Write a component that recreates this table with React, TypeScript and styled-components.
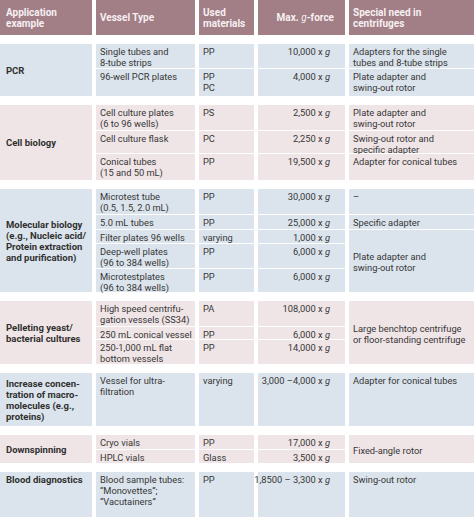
import React from 'react';
import styled, { createGlobalStyle } from 'styled-components';

const GlobalStyle = createGlobalStyle`
  html, body {
    margin: 0;
    padding: 0;
    background: #ffffff;
  }
  body {
    font-family: Roboto, "Noto Sans", Arial, sans-serif;
    color: #363636;
  }
`;

const tones = {
  blue: '#dbe4ec',
  pink: '#f0e5e6',
  head: '#a27e86',
};

type Tone = keyof typeof tones;

const Table = styled.div`
  width: 474px;
  display: flex;
  flex-direction: column;
  gap: 9px;
`;

const Grid = styled.div<{ $tone: Tone; $rows: string }>`
  display: grid;
  grid-template-columns: 92px 99px 55px 87px 125px;
  grid-template-rows: ${(p) => p.$rows};
  column-gap: 4px;
  row-gap: 1px;
  --tone: ${(p) => tones[p.$tone]};
`;

const HeadCell = styled.div<{ $right?: boolean }>`
  background: var(--tone);
  color: #f7f0f2;
  font-size: 10px;
  font-weight: 700;
  line-height: 11px;
  display: flex;
  align-items: center;
  justify-content: ${(p) => (p.$right ? 'flex-end' : 'flex-start')};
  padding: 0 ${(p) => (p.$right ? '11px' : '4px')} 0 4px;
  &:first-child {
    padding-left: 6px;
  }
`;

const Label = styled.div<{ $span: number; $top?: boolean }>`
  grid-row: span ${(p) => p.$span};
  background: var(--tone);
  font-size: 9.5px;
  font-weight: 700;
  line-height: 11px;
  color: #303030;
  padding: 2px 4px 2px 6px;
  white-space: pre-line;
  display: flex;
  align-items: ${(p) => (p.$top ? 'flex-start' : 'center')};
`;

const Cell = styled.div<{ $right?: boolean; $span?: number; $center?: boolean }>`
  grid-row: span ${(p) => p.$span ?? 1};
  background: var(--tone);
  font-size: 9.3px;
  line-height: 11px;
  padding: ${(p) => (p.$right ? '2px 15px 0 2px' : '2px 2px 0 4px')};
  text-align: ${(p) => (p.$right ? 'right' : 'left')};
  white-space: ${(p) => (p.$right ? 'nowrap' : 'pre-line')};
  display: flex;
  flex-direction: column;
  justify-content: ${(p) => (p.$center ? 'center' : 'flex-start')};
  align-items: ${(p) => (p.$right ? 'flex-end' : 'flex-start')};
`;

const G = styled.i<{ $light?: boolean }>`
  font-style: italic;
  font-weight: ${(p) => (p.$light ? 400 : 'inherit')};
`;

type Row = {
  vessel: string;
  material: string;
  force: string;
  special?: string;
  specialSpan?: number;
};

type Group = {
  label: string;
  tone: Tone;
  rows: string;
  top?: boolean;
  items: Row[];
};

const groups: Group[] = [
  {
    label: 'PCR',
    tone: 'blue',
    rows: '24px 27px',
    items: [
      { vessel: 'Single tubes and\n8-tube strips', material: 'PP', force: '10,000', special: 'Adapters for the single\ntubes and 8-tube strips' },
      { vessel: '96-well PCR plates', material: 'PP\nPC', force: '4,000', special: 'Plate adapter and\nswing-out rotor' },
    ],
  },
  {
    label: 'Cell biology',
    tone: 'pink',
    rows: '25px 22px 26px',
    items: [
      { vessel: 'Cell culture plates\n(6 to 96 wells)', material: 'PS', force: '2,500', special: 'Plate adapter and\nswing-out rotor' },
      { vessel: 'Cell culture flask', material: 'PC', force: '2,250', special: 'Swing-out rotor and\nspecific adapter' },
      { vessel: 'Conical tubes\n(15 and 50 mL)', material: 'PP', force: '19,500', special: 'Adapter for conical tubes' },
    ],
  },
  {
    label: 'Molecular biology\n(e.g., Nucleic acid/\nProtein extraction\nand purification)',
    tone: 'blue',
    rows: '25px 14px 13px 24px 23px',
    items: [
      { vessel: 'Microtest tube\n(0.5, 1.5, 2.0 mL)', material: 'PP', force: '30,000', special: '–' },
      { vessel: '5.0 mL tubes', material: 'PP', force: '25,000', special: 'Specific adapter' },
      { vessel: 'Filter plates 96 wells', material: 'varying', force: '1,000', special: 'Plate adapter and\nswing-out rotor', specialSpan: 3 },
      { vessel: 'Deep-well plates\n(96 to 384 wells)', material: 'PP', force: '6,000' },
      { vessel: 'Microtestplates\n(96 to 384 wells)', material: 'PP', force: '6,000' },
    ],
  },
  {
    label: 'Pelleting yeast/\nbacterial cultures',
    tone: 'pink',
    rows: '25px 12px 24px',
    items: [
      { vessel: 'High speed centrifu-\ngation vessels (SS34)', material: 'PA', force: '108,000', special: 'Large benchtop centrifuge\nor floor-standing centrifuge', specialSpan: 3 },
      { vessel: '250 mL conical vessel', material: 'PP', force: '6,000' },
      { vessel: '250-1,000 mL flat\nbottom vessels', material: 'PP', force: '14,000' },
    ],
  },
  {
    label: 'Increase concen-\ntration of macro-\nmolecules (e.g.,\nproteins)',
    tone: 'blue',
    rows: '53px',
    items: [
      { vessel: 'Vessel for ultra-\nfiltration', material: 'varying', force: '3,000 –4,000', special: 'Adapter for conical tubes' },
    ],
  },
  {
    label: 'Downspinning',
    tone: 'pink',
    rows: '14px 13px',
    items: [
      { vessel: 'Cryo vials', material: 'PP', force: '17,000', special: 'Fixed-angle rotor', specialSpan: 2 },
      { vessel: 'HPLC vials', material: 'Glass', force: '3,500' },
    ],
  },
  {
    label: 'Blood diagnostics',
    tone: 'blue',
    rows: '45px',
    top: true,
    items: [
      { vessel: 'Blood sample tubes:\n“Monovettes”;\n“Vacutainers”', material: 'PP', force: '1,8500 – 3,300', special: 'Swing-out rotor' },
    ],
  },
];

const Force = ({ value }: { value: string }) => (
  <span>
    {value} x <G>g</G>
  </span>
);

const App = () => {
  return (
    <>
      <GlobalStyle />
      <Table>
        <Grid $tone="head" $rows="35px">
          <HeadCell>
            Application
            <br />
            example
          </HeadCell>
          <HeadCell>Vessel Type</HeadCell>
          <HeadCell>
            Used
            <br />
            materials
          </HeadCell>
          <HeadCell $right>
            <span>
              Max. <G $light>g</G>-force
            </span>
          </HeadCell>
          <HeadCell>
            Special need in
            <br />
            centrifuges
          </HeadCell>
        </Grid>

        {groups.map((group) => (
          <Grid key={group.label} $tone={group.tone} $rows={group.rows}>
            <Label $span={group.items.length} $top={group.top}>
              {group.label}
            </Label>
            {group.items.map((row) => (
              <React.Fragment key={row.vessel}>
                <Cell>{row.vessel}</Cell>
                <Cell>{row.material}</Cell>
                <Cell $right>
                  <Force value={row.force} />
                </Cell>
                {row.special !== undefined && (
                  <Cell $span={row.specialSpan} $center={!!row.specialSpan}>
                    {row.special}
                  </Cell>
                )}
              </React.Fragment>
            ))}
          </Grid>
        ))}
      </Table>
    </>
  );
};

export default App;
